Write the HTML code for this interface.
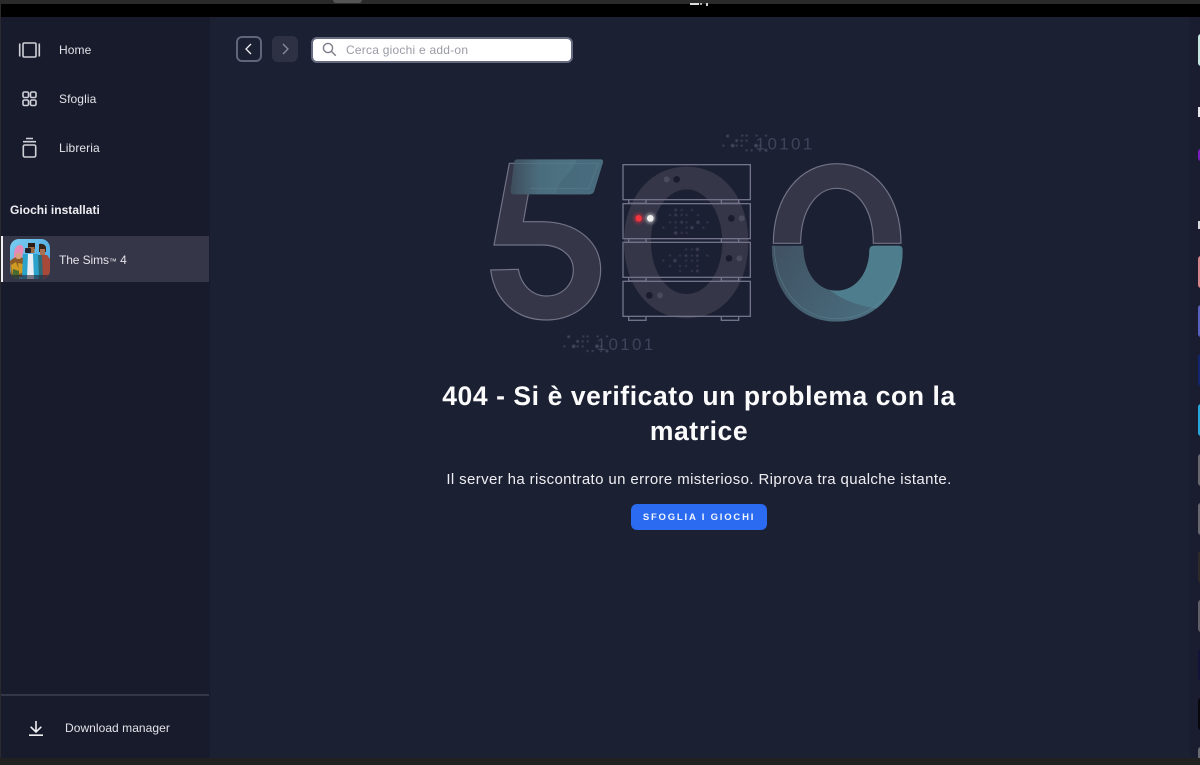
<!DOCTYPE html>
<html lang="it"><head><meta charset="utf-8"><title>EA app</title>
<style>
*{margin:0;padding:0;box-sizing:border-box}
html,body{width:1200px;height:765px;overflow:hidden;background:#1c2033;font-family:"Liberation Sans",sans-serif;color:#e6e7ec}
#w{position:absolute;left:0;top:0;width:1200px;height:765px;overflow:hidden;filter:blur(.35px)}
.a{position:absolute;white-space:nowrap}
.t{font-size:12px;line-height:16px;letter-spacing:.1px;color:#e2e3e8}
</style></head><body><div id="w">
<div class="a" style="left:0;top:17px;width:1200px;height:741px;background:#1c2033"></div>
<div class="a" style="left:0;top:17px;width:210px;height:741px;background:#181b2c"></div>
<div class="a" style="left:1190px;top:17px;width:10px;height:741px;background:#1a1d2f"></div>
<!-- top and bottom chrome -->
<div class="a" style="left:0;top:0;width:1200px;height:4px;background:#2a2a2a"></div>
<div class="a" style="left:333px;top:0;width:29px;height:3px;background:#555;border-radius:0 0 3px 3px"></div>
<div class="a" style="left:0;top:4px;width:1200px;height:13px;background:#000"></div>
<div class="a" style="left:690px;top:3px;width:9px;height:2px;background:#ddd"></div>
<div class="a" style="left:700px;top:3px;width:2px;height:2px;background:#aaa"></div>
<div class="a" style="left:706px;top:3px;width:2px;height:3px;background:#ccc"></div>
<div class="a" style="left:0;top:758px;width:1200px;height:7px;background:#212121"></div>
<div class="a" style="left:0;top:4px;width:1px;height:754px;background:#2a2a2e"></div>
<!-- right strip icons -->
<div class="a" style="left:1198px;top:34px;width:6px;height:32px;background:#c4e6e0;border-radius:4px"></div>
<div class="a" style="left:1198px;top:107px;width:4px;height:10px;background:#e8e8ec"></div>
<div class="a" style="left:1198px;top:149px;width:6px;height:12px;background:#7a1cc0;border-radius:5px"></div>
<div class="a" style="left:1198px;top:221px;width:4px;height:8px;background:#d8d8dc"></div>
<div class="a" style="left:1198px;top:256px;width:6px;height:32px;background:#d8868c;border-radius:4px"></div>
<div class="a" style="left:1198px;top:305px;width:6px;height:32px;background:#5a62c0;border-radius:4px"></div>
<div class="a" style="left:1198px;top:354px;width:6px;height:32px;background:#12256e;border-radius:4px"></div>
<div class="a" style="left:1198px;top:404px;width:6px;height:32px;background:#27a8dc;border-radius:4px"></div>
<div class="a" style="left:1198px;top:454px;width:6px;height:32px;background:#66676f;border-radius:4px"></div>
<div class="a" style="left:1198px;top:503px;width:6px;height:32px;background:#66676f;border-radius:4px"></div>
<div class="a" style="left:1198px;top:551px;width:6px;height:32px;background:#2e2a2a;border-radius:4px"></div>
<div class="a" style="left:1198px;top:600px;width:6px;height:32px;background:#5e5f67;border-radius:4px"></div>
<div class="a" style="left:1198px;top:649px;width:6px;height:32px;background:#15123a;border-radius:4px"></div>
<div class="a" style="left:1198px;top:698px;width:6px;height:32px;background:#08080c;border-radius:4px"></div>
<div class="a" style="left:1198px;top:747px;width:6px;height:11px;background:#6a6b72;border-radius:4px 4px 0 0"></div>
<!-- sidebar -->
<svg class="a" style="left:15px;top:38px" width="28" height="122" viewBox="0 0 28 122" fill="none" stroke="#cfd0d8" stroke-width="1.6">
<path d="M4.7 5.5v13M24.3 5.5v13"/><rect x="8" y="5" width="13" height="14" rx="1.2"/>
<rect x="8" y="54" width="5.5" height="5.5" rx="1.3"/><rect x="15.5" y="54" width="5.5" height="5.5" rx="1.3"/><rect x="8" y="62" width="5.5" height="5.5" rx="1.3"/><rect x="15.5" y="62" width="5.5" height="5.5" rx="1.3"/>
<path d="M11 100.5h7M8 103.7h13"/><rect x="8.3" y="107" width="12.4" height="12" rx="1.5"/>
</svg>
<div class="a t" style="left:59px;top:42px">Home</div>
<div class="a t" style="left:59px;top:91px">Sfoglia</div>
<div class="a t" style="left:59px;top:140px">Libreria</div>
<div class="a" style="left:10px;top:202px;font-size:12px;line-height:16px;font-weight:700;letter-spacing:.03px;color:#eeeef2">Giochi installati</div>
<div class="a" style="left:1px;top:236px;width:208px;height:46px;background:#353749"></div>
<div class="a" style="left:1px;top:236px;width:2px;height:46px;background:#f2f2f5"></div>
<svg class="a" style="left:10px;top:239px" width="40" height="40" viewBox="0 0 40 40">
<defs><clipPath id="c"><rect width="40" height="40" rx="9"/></clipPath><linearGradient id="sky" x1="0" y1="0" x2="1" y2="1"><stop offset="0" stop-color="#7ccdf0"/><stop offset="1" stop-color="#3f9fe0"/></linearGradient></defs>
<g clip-path="url(#c)">
<rect width="40" height="40" fill="url(#sky)"/>
<path d="M4 16Q4 6 11 6Q15 8 13 14L11 22L3 24Z" fill="#e58ab4"/>
<path d="M0 22Q6 16 13 19L14 38H1Z" fill="#8c5a24"/><path d="M1 26l5-3 3 8-7 4zM8 24l5 1 1 8-5 2z" fill="#d19a22"/><path d="M3 30l6 2v8H2z" fill="#4a6a30"/>
<rect x="6" y="14" width="5" height="6" rx="2" fill="#d8a080"/>
<path d="M29 5q5-1 7 3v5h-7z" fill="#3a2418"/><rect x="30" y="10" width="5" height="6" fill="#a87050"/>
<path d="M27 16h10l3 4v20H29z" fill="#a84838"/><path d="M27 16h5l1 24h-5z" fill="#2d6a78"/>
<path d="M18 4h7v6h-7z" fill="#2c1c14"/><rect x="18.5" y="8" width="6" height="6" fill="#a06840"/>
<path d="M13 15h15l1 25H12z" fill="#2ba2cc"/><path d="M18 15h5l1 25h-7z" fill="#e8eef4"/>
<rect x="15" y="9" width="6" height="5" rx="1" fill="#20212c"/>
<rect x="0" y="36" width="40" height="4" fill="#242536" opacity=".6"/>
</g></svg>
<div class="a t" style="left:59px;top:252px;letter-spacing:-.1px">The Sims<span style="font-size:8px;letter-spacing:0">™</span> 4</div>
<div class="a" style="left:1px;top:694px;width:208px;height:1.5px;background:#34374a"></div>
<svg class="a" style="left:27px;top:719px" width="18" height="18" viewBox="0 0 18 18" fill="none" stroke="#eeeef2" stroke-width="1.6"><path d="M9 2v10.5M3.7 7.8L9 13l5.3-5.2M2 16.2h14"/></svg>
<div class="a t" style="left:65px;top:720px;letter-spacing:.05px">Download manager</div>
<!-- header -->
<div class="a" style="left:236px;top:36px;width:26px;height:26px;border:2px solid #62657a;border-radius:6px;background:#1c2033"></div>
<svg class="a" style="left:236px;top:36px" width="26" height="26" fill="none" stroke="#eeeef2" stroke-width="1.3"><path d="M15 8l-5 5 5 5"/></svg>
<div class="a" style="left:272px;top:36px;width:26px;height:26px;border-radius:6px;background:#2e3144"></div>
<svg class="a" style="left:272px;top:36px" width="26" height="26" fill="none" stroke="#8b8d9c" stroke-width="1.3"><path d="M11 8l5 5-5 5"/></svg>
<div class="a" style="left:311px;top:37px;width:262px;height:25.5px;background:#fff;border:2px solid #666a80;border-radius:6px"></div>
<svg class="a" style="left:322px;top:42px" width="15" height="15" fill="none" stroke="#7d7e88" stroke-width="1.4"><circle cx="6" cy="6" r="4.6"/><path d="M9.4 9.4l4.4 4.4"/></svg>
<div class="a" style="left:346px;top:42px;font-size:12px;line-height:16px;letter-spacing:.23px;color:#9a9ba5">Cerca giochi e add-on</div>
<!-- illustration -->
<svg class="a" style="left:470px;top:125px" width="450" height="235" viewBox="0 0 1350 705" fill="none">
<defs>
<linearGradient id="tl" x1="0" y1="0" x2="1" y2="0"><stop offset="0" stop-color="#3e4d5e"/><stop offset=".3" stop-color="#4a6c7c"/><stop offset="1" stop-color="#4f7b8a"/></linearGradient>
<linearGradient id="tb" x1="0" y1="0" x2="1" y2=".4"><stop offset="0" stop-color="#3f5061"/><stop offset="1" stop-color="#4a6f7f"/></linearGradient>
<clipPath id="tc"><path d="M905 362H1000C1000 440 1040 497 1100 497C1160 497 1198 440 1198 375Q1198 362 1215 362H1285Q1298 362 1298 375C1298 500 1215 590 1100 590C985 590 905 500 905 362Z"/></clipPath>
<filter id="glow" x="-100%" y="-100%" width="300%" height="300%"><feGaussianBlur stdDeviation="5"/></filter>
<filter id="sb"><feGaussianBlur stdDeviation="1.2"/></filter>
</defs>
<!-- 5 -->
<path d="M118 115H385L356 190H178L160 290H215C320 290 392 350 392 435C392 520 320 585 230 585C140 585 75 530 62 435L145 433C155 485 190 513 230 513C275 513 310 480 310 435C310 390 270 360 215 360H72Z" fill="#353647" stroke="#727386" stroke-width="3.5"/>
<path d="M140 103H392Q402 103 398 115L372 200Q368 208 358 208H132Q120 208 122 196L132 112Q134 103 140 103Z" fill="url(#tl)"/>
<path d="M320 103H392Q402 103 398 115L372 200Q368 208 358 208H256Q265 175 290 150Q315 125 320 103Z" fill="#47697a" opacity=".8"/>
<path d="M118 115H385L356 190H178" stroke="#628090" stroke-width="2" opacity=".7"/>
<!-- middle 0 -->
<path fill-rule="evenodd" d="M650 125C760 125 835 220 835 350C835 485 760 580 650 580C540 580 462 485 462 350C462 220 540 125 650 125ZM650 193C590 193 543 265 543 350C543 440 590 507 650 507C710 507 757 440 757 350C757 265 710 193 650 193Z" fill="#353647"/>
<g stroke="#72738a" stroke-width="4">
<rect x="459" y="119" width="382" height="105"/><rect x="459" y="236" width="382" height="105"/><rect x="459" y="352" width="382" height="105"/><rect x="459" y="469" width="382" height="105"/>
<path d="M476 224v11h52v-11M754 224v11h52v-11M476 341v11h52v-11M754 341v11h52v-11M476 457v11h52v-11M754 457v11h52v-11M476 574v12h52v-12M754 574v12h52v-12"/>
</g>
<g fill="#1a1d2e"><circle cx="620" cy="163" r="10"/><circle cx="784" cy="280" r="10"/><circle cx="777" cy="400" r="10"/><circle cx="538" cy="511" r="10"/></g>
<g fill="#4a4b5d"><circle cx="590" cy="163" r="9"/><circle cx="815" cy="280" r="9"/><circle cx="808" cy="400" r="9"/><circle cx="570" cy="511" r="9"/></g>
<circle cx="506" cy="280" r="15" fill="#ff2f3e" opacity=".5" filter="url(#glow)"/><circle cx="506" cy="280" r="9.5" fill="#f3343f"/>
<circle cx="541" cy="280" r="15" fill="#fff" opacity=".5" filter="url(#glow)"/><circle cx="541" cy="280" r="10" fill="#f0f0f0"/>
<!-- dot grids -->
<g fill="#3f4156" filter="url(#sb)">
<circle cx="617" cy="255" r="4"/><circle cx="635" cy="255" r="3"/><circle cx="666" cy="255" r="3"/><circle cx="600" cy="270" r="3"/><circle cx="617" cy="270" r="4"/><circle cx="635" cy="270" r="3"/><circle cx="650" cy="270" r="3"/><circle cx="684" cy="270" r="3"/><circle cx="600" cy="292" r="3"/><circle cx="617" cy="292" r="3"/><circle cx="635" cy="292" r="4"/><circle cx="650" cy="292" r="3"/><circle cx="684" cy="292" r="5"/><circle cx="712" cy="292" r="3"/><circle cx="580" cy="308" r="3"/><circle cx="617" cy="308" r="3"/><circle cx="650" cy="308" r="3"/><circle cx="666" cy="308" r="5"/><circle cx="700" cy="308" r="3"/><circle cx="617" cy="324" r="5"/><circle cx="635" cy="324" r="3"/><circle cx="650" cy="324" r="3"/>
<circle cx="648" cy="373" r="3"/><circle cx="666" cy="373" r="3"/><circle cx="682" cy="373" r="5"/><circle cx="600" cy="392" r="3"/><circle cx="630" cy="392" r="3"/><circle cx="648" cy="392" r="4"/><circle cx="666" cy="392" r="3"/><circle cx="682" cy="392" r="4"/><circle cx="712" cy="392" r="3"/><circle cx="580" cy="407" r="3"/><circle cx="615" cy="407" r="5"/><circle cx="648" cy="407" r="3"/><circle cx="666" cy="407" r="3"/><circle cx="682" cy="407" r="3"/><circle cx="600" cy="423" r="3"/><circle cx="630" cy="423" r="3"/><circle cx="648" cy="423" r="3"/><circle cx="682" cy="423" r="3"/><circle cx="630" cy="438" r="3"/><circle cx="666" cy="438" r="3"/><circle cx="682" cy="438" r="4"/>
</g>
<!-- right 0 -->
<path d="M910 355C910 215 990 116 1100 116C1215 116 1293 215 1293 355H1210C1210 255 1165 190 1100 190C1040 190 992 255 992 355Z" fill="#353647" stroke="#727386" stroke-width="3.5"/>
<g clip-path="url(#tc)">
<rect x="900" y="355" width="405" height="240" fill="url(#tb)"/>
<path d="M1074 490Q1120 532 1205 548L1320 570V350H1150Z" fill="#4e7d8d"/>
</g>
<path d="M912 362C917 490 990 581 1100 581C1190 581 1270 520 1292 420" stroke="#6a8f9c" stroke-width="2" opacity=".6"/>
<!-- 10101 -->
<g font-family="Liberation Sans,sans-serif" font-size="51" letter-spacing="7" fill="#40425a"><text x="857" y="73">10101</text><text x="380" y="675">10101</text></g>
<g fill="#4c4e60" filter="url(#sb)"><circle cx="773" cy="33" r="4"/><circle cx="800" cy="47" r="4"/><circle cx="788" cy="62" r="5"/><circle cx="817" cy="32" r="3"/><circle cx="830" cy="32" r="3"/><circle cx="815" cy="47" r="3"/><circle cx="830" cy="47" r="3"/><circle cx="800" cy="62" r="3"/><circle cx="815" cy="62" r="3"/><circle cx="858" cy="62" r="5"/><circle cx="870" cy="62" r="3"/><circle cx="760" cy="62" r="3"/><circle cx="888" cy="76" r="4"/><circle cx="870" cy="76" r="3"/><circle cx="845" cy="76" r="3"/><circle cx="830" cy="76" r="3"/><circle cx="860" cy="32" r="3"/><circle cx="888" cy="32" r="3"/></g>
<g fill="#4c4e60" filter="url(#sb)"><circle cx="296" cy="635" r="4"/><circle cx="323" cy="649" r="4"/><circle cx="311" cy="664" r="5"/><circle cx="340" cy="634" r="3"/><circle cx="353" cy="634" r="3"/><circle cx="338" cy="649" r="3"/><circle cx="353" cy="649" r="3"/><circle cx="323" cy="664" r="3"/><circle cx="338" cy="664" r="3"/><circle cx="381" cy="664" r="5"/><circle cx="393" cy="664" r="3"/><circle cx="283" cy="664" r="3"/><circle cx="411" cy="678" r="4"/><circle cx="393" cy="678" r="3"/><circle cx="368" cy="678" r="3"/><circle cx="353" cy="678" r="3"/><circle cx="383" cy="634" r="3"/><circle cx="411" cy="634" r="3"/></g>
</svg>
<!-- message -->
<div class="a" style="left:340px;top:379px;width:718px;text-align:center;font-size:26.5px;line-height:35px;font-weight:700;letter-spacing:.58px;color:#fbfbfc;white-space:normal">404 - Si è verificato un problema con la<br>matrice</div>
<div class="a" style="left:340px;top:471px;width:718px;text-align:center;font-size:15px;line-height:18px;letter-spacing:.38px;color:#eeeef2">Il server ha riscontrato un errore misterioso. Riprova tra qualche istante.</div>
<div class="a" style="left:631px;top:504px;width:136px;height:26px;border-radius:6px;background:#2a6bf2;color:#f2f5ff;text-align:center;font-size:9.5px;line-height:27px;font-weight:700;letter-spacing:1.8px">SFOGLIA I GIOCHI</div>
</div></body></html>
